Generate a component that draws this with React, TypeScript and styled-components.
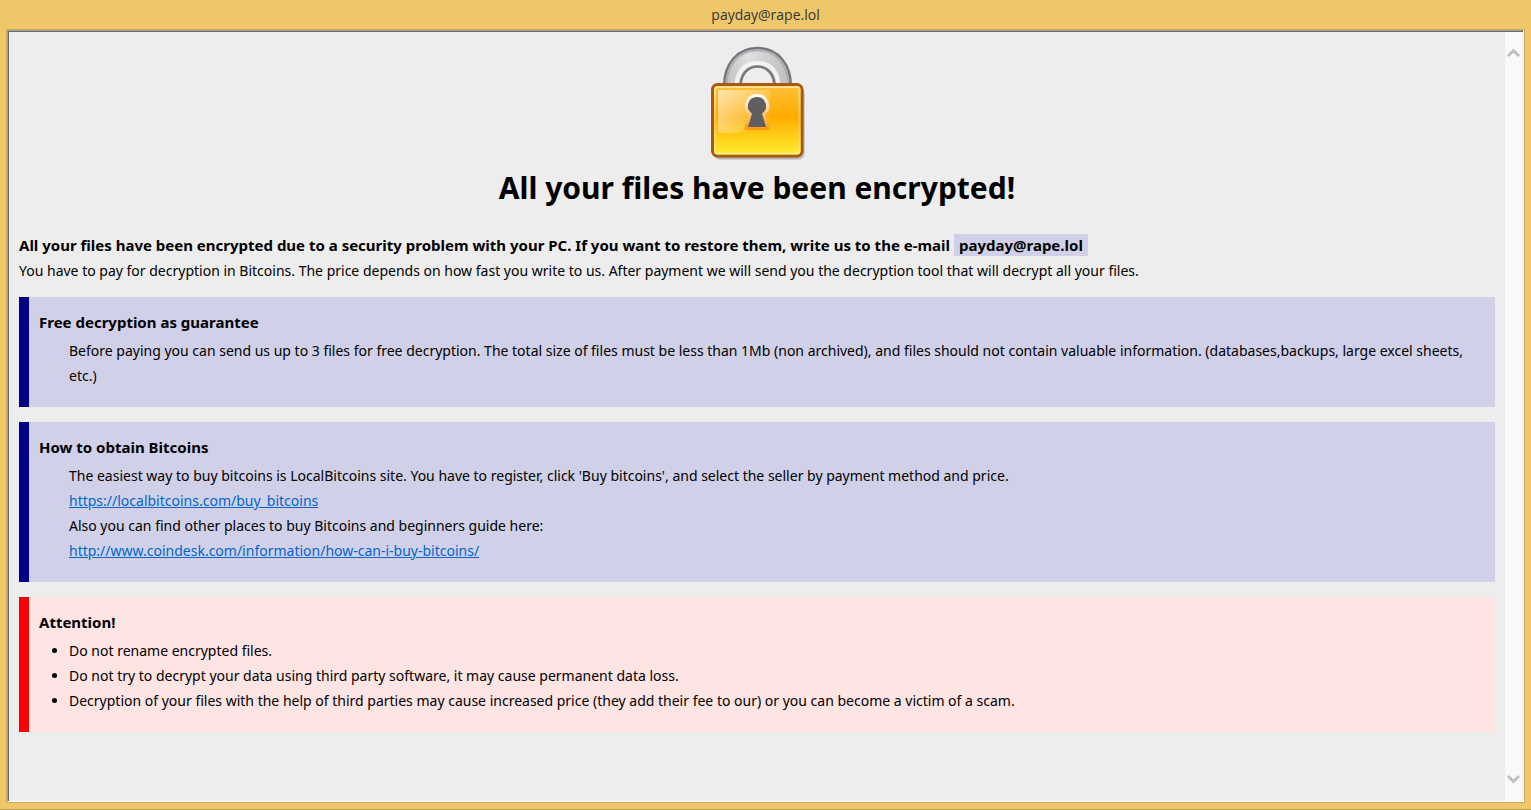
import React from "react";
import styled, { createGlobalStyle } from "styled-components";

const GlobalStyle = createGlobalStyle`
  * { box-sizing: border-box; }
  body { margin: 0; background: #efc769; }
`;

const Window = styled.div`
  display: flex;
  flex-direction: column;
  min-height: 100vh;
  padding: 0 6px 6px;
  background: #efc769;
  border-bottom: 1px solid #b99a52;
  font-family: Tahoma, "Noto Sans", sans-serif;
  font-size: 14px;
  line-height: 25px;
  color: #000;
`;

const TitleBar = styled.header`
  height: 29px;
  line-height: 30px;
  text-align: center;
  font-family: "Segoe UI", "Open Sans", sans-serif;
  font-size: 14px;
  color: #333;
`;

const Frame = styled.div`
  flex: 1;
  display: flex;
  border: 1px solid #c9a95d;
`;

const Viewport = styled.div`
  flex: 1;
  display: flex;
  min-width: 0;
  border: 1px solid;
  border-color: #a0a0a0 #fff #fff #a0a0a0;
  box-shadow: inset 1px 1px 0 #696969;
  background: #ededed;
`;

const Page = styled.main`
  flex: 1;
  min-width: 0;
  padding: 14px 10px 0 11px;
`;

const ScrollTrack = styled.div`
  display: flex;
  flex-direction: column;
  justify-content: space-between;
  width: 18px;
  margin: 1px 0 0;
  padding: 16px 0 17px;
  border-right: 1px solid #ededed;
  background: #f9f9f9;
`;

const ScrollButton = styled.button`
  display: block;
  width: 17px;
  height: 10px;
  padding: 0;
  border: 0;
  background: none;
  svg { display: block; margin: 0 auto; }
`;

const Lock = styled.svg`
  display: block;
  width: 100px;
  height: 116px;
  margin: 0 auto;
`;

const Title = styled.h1`
  margin: 4px 0 23px;
  font-size: 30px;
  line-height: 45px;
  text-align: center;
`;

const Line = styled.p`
  margin: 0;
`;

const Lead = styled.p`
  margin: 0;
  font-size: 15px;
  font-weight: 700;
`;

const Mark = styled.span`
  padding: 1px 5px;
  background: #d0d0e8;
`;

const Notes = styled.div`
  display: grid;
  gap: 15px;
  margin-top: 14px;
`;

const Note = styled.section<{ $alert?: boolean }>`
  padding: 13px 10px 19px;
  border-left: 10px solid ${(p) => (p.$alert ? "#f00" : "#00008b")};
  background: ${(p) => (p.$alert ? "#ffe4e4" : "#d0d0e8")};
`;

const NoteTitle = styled.h2`
  margin: 0 0 3px;
  font-size: 15px;
  line-height: 25px;
`;

const NoteBody = styled.div`
  padding-left: 30px;
`;

const List = styled.ul`
  margin: 0;
  padding-left: 30px;
`;

const Link = styled.a`
  color: #0066cc;
  text-decoration: underline;
`;

function Padlock() {
  return (
    <Lock viewBox="0 0 100 116" aria-hidden="true">
      <defs>
        <linearGradient id="gold" x1="0" y1="0" x2="0" y2="1">
          <stop offset="0" stopColor="#ffc13a" />
          <stop offset="0.45" stopColor="#ffab00" />
          <stop offset="1" stopColor="#ffef30" />
        </linearGradient>
        <linearGradient id="rim" x1="0" y1="0" x2="0" y2="1">
          <stop offset="0" stopColor="#ffe08a" />
          <stop offset="0.5" stopColor="#ffc04a" />
          <stop offset="1" stopColor="#ffef7a" />
        </linearGradient>
        <linearGradient id="gloss" x1="0" y1="0" x2="1" y2="0.6">
          <stop offset="0" stopColor="#fff" stopOpacity="0.6" />
          <stop offset="1" stopColor="#fff" stopOpacity="0.05" />
        </linearGradient>
        <linearGradient id="steel" x1="0" y1="0" x2="1" y2="0">
          <stop offset="0" stopColor="#bdbdbd" />
          <stop offset="0.35" stopColor="#e0e0e2" />
          <stop offset="1" stopColor="#bcbcbc" />
        </linearGradient>
        <linearGradient id="hole" x1="0" y1="0" x2="0" y2="1">
          <stop offset="0" stopColor="#fff" />
          <stop offset="0.4" stopColor="#ffd9a0" />
          <stop offset="1" stopColor="#ff9410" />
        </linearGradient>
      </defs>
      <path d="M17 42C17 18 31 3 50.500 3S84 18 84 42H67.500C67.500 29 60 21.500 50.500 21.500S33.500 29 33.500 42Z" fill="url(#steel)" stroke="#77777b" strokeWidth="2.500" />
      <path d="M19.500 41C20 20 32 5.500 50.500 5.500S81 20 81.500 41" fill="none" stroke="#a9a8b4" strokeWidth="1.500" />
      <path d="M29.500 42C29.500 26 38 18 50.500 18S71.500 26 71.500 42" fill="none" stroke="#f3f3f6" strokeWidth="4" />
      <rect x="7" y="42" width="91" height="73" rx="7" fill="#8a8a8a" opacity="0.3" />
      <rect x="6" y="41" width="91" height="73" rx="6" fill="#8a8a8a" opacity="0.4" />
      <rect x="5.500" y="39.500" width="89.500" height="71.500" rx="5" fill="url(#gold)" stroke="#a6590f" strokeWidth="3" />
      <rect x="8" y="42" width="84.500" height="66.500" rx="3" fill="none" stroke="url(#rim)" strokeWidth="2" />
      <path d="M11 45H63V75C52 75 44 88 25 88Q15 88 11 87Z" fill="url(#gloss)" />
      <path d="M50 49a12 12 0 0 1 8 21L63 85H37L42 70A12 12 0 0 1 50 49Z" fill="url(#hole)" />
      <path d="M50 52a9 9 0 0 1 5 16.500L59 82H41L45 68.500A9 9 0 0 1 50 52Z" fill="#5f5f61" />
    </Lock>
  );
}

function Chevron({ down }: { down?: boolean }) {
  return (
    <svg width="13" height="10" viewBox="0 0 13 10" aria-hidden="true">
      <path d={down ? "M1 2L6.500 7.500L12 2" : "M1 8L6.500 2.500L12 8"} fill="none" stroke="#bfbfbf" strokeWidth="3" />
    </svg>
  );
}

export default function App() {
  return (
    <Window>
      <GlobalStyle />
      <TitleBar>payday@rape.lol</TitleBar>
      <Frame>
        <Viewport>
          <Page>
            <Padlock />
            <Title>All your files have been encrypted!</Title>
            <Lead>
              All your files have been encrypted due to a security problem with your PC. If you want to restore them, write us to the e-mail{" "}
              <Mark>payday@rape.lol</Mark>
            </Lead>
            <Line>
              You have to pay for decryption in Bitcoins. The price depends on how fast you write to us. After payment we will send you the decryption tool that will decrypt all your files.
            </Line>
            <Notes>
              <Note>
                <NoteTitle>Free decryption as guarantee</NoteTitle>
                <NoteBody>
                  Before paying you can send us up to 3 files for free decryption. The total size of files must be less than 1Mb (non archived), and files should not contain valuable information. (databases,backups, large excel sheets, etc.)
                </NoteBody>
              </Note>
              <Note>
                <NoteTitle>How to obtain Bitcoins</NoteTitle>
                <NoteBody>
                  <Line>
                    The easiest way to buy bitcoins is LocalBitcoins site. You have to register, click 'Buy bitcoins', and select the seller by payment method and price.
                  </Line>
                  <Line>
                    <Link href="https://localbitcoins.com/buy_bitcoins">https://localbitcoins.com/buy_bitcoins</Link>
                  </Line>
                  <Line>Also you can find other places to buy Bitcoins and beginners guide here:</Line>
                  <Line>
                    <Link href="http://www.coindesk.com/information/how-can-i-buy-bitcoins/">http://www.coindesk.com/information/how-can-i-buy-bitcoins/</Link>
                  </Line>
                </NoteBody>
              </Note>
              <Note $alert>
                <NoteTitle>Attention!</NoteTitle>
                <List>
                  <li>Do not rename encrypted files.</li>
                  <li>Do not try to decrypt your data using third party software, it may cause permanent data loss.</li>
                  <li>Decryption of your files with the help of third parties may cause increased price (they add their fee to our) or you can become a victim of a scam.</li>
                </List>
              </Note>
            </Notes>
          </Page>
          <ScrollTrack>
            <ScrollButton aria-label="Scroll up"><Chevron /></ScrollButton>
            <ScrollButton aria-label="Scroll down"><Chevron down /></ScrollButton>
          </ScrollTrack>
        </Viewport>
      </Frame>
    </Window>
  );
}
